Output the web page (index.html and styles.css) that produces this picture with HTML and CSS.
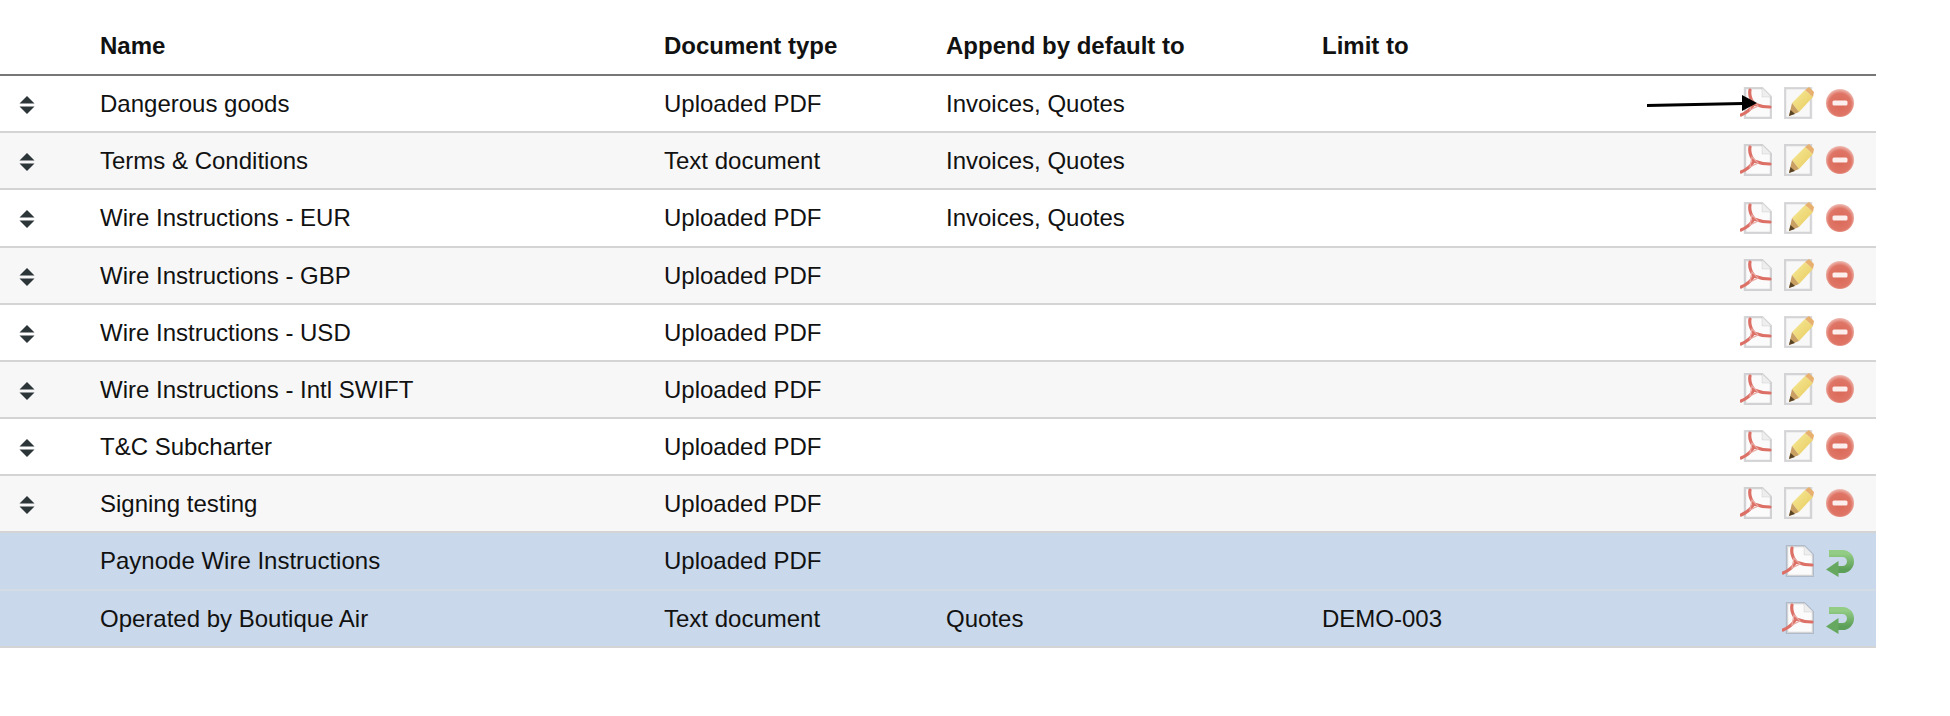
FILE: index.html
```html
<!DOCTYPE html>
<html lang="en">
<head>
<meta charset="utf-8">
<title>Documents</title>
<link rel="stylesheet" href="styles.css">
</head>
<body>
<svg class="defs" width="0" height="0" aria-hidden="true">
  <defs>
    <radialGradient id="minus-grad" cx="0.5" cy="0.55" r="0.55">
      <stop offset="0" stop-color="#da6857"/>
      <stop offset="0.72" stop-color="#df7566"/>
      <stop offset="1" stop-color="#efbcb4"/>
    </radialGradient>
    <linearGradient id="return-grad" x1="0" y1="0" x2="0" y2="1">
      <stop offset="0" stop-color="#93cc85"/>
      <stop offset="1" stop-color="#5c9f58"/>
    </linearGradient>
    <linearGradient id="pencil-grad" x1="0" y1="0" x2="1" y2="1">
      <stop offset="0" stop-color="#f6eb9a"/>
      <stop offset="1" stop-color="#e8c95c"/>
    </linearGradient>
    <symbol id="i-sort" viewBox="0 0 16 18">
      <path d="M8 0 15.500 7.500H.5z" fill="#2c3538"/>
      <path d="M8 18 .5 10.500h15z" fill="#2c3538"/>
    </symbol>
    <symbol id="i-pdf" viewBox="0 0 32 32">
      <path d="M5 1h17l9 9v21H5z" fill="#fbfbfb" stroke="#78787f" stroke-opacity=".3" stroke-width="2.400"/>
      <path d="M22 1v9h9" fill="#eeeeee" stroke="#78787f" stroke-opacity=".15" stroke-width="1"/>
      <path d="M10 3c-1 5 1 10 4 14 M14 17c5 2 10 3 16 3 M14 17c-3 5-8 9-13 11" fill="none" stroke="#dc7066" stroke-width="3.200" stroke-linecap="round"/>
      <path d="M12 13 18 19 10 23z" fill="none" stroke="#e9a8a2" stroke-width="1.200"/>
    </symbol>
    <symbol id="i-edit" viewBox="0 0 30 32">
      <path d="M1 1h26v30H1z" fill="#f8f8f8" stroke="#78787f" stroke-opacity=".28" stroke-width="2.400"/>
      <path d="M8 16 21 3l8 7-14 15z" fill="url(#pencil-grad)"/>
      <path d="M21 3l4-3 5 5-1 5z" fill="#e8b06e"/>
      <path d="M8 16l7 9-10 4z" fill="#c99f62"/>
      <path d="M5 29l1.500-6 4.500 4z" fill="#5a4426"/>
    </symbol>
    <symbol id="i-minus" viewBox="0 0 28 28">
      <circle cx="14" cy="14" r="14" fill="url(#minus-grad)"/>
      <rect x="6.500" y="11.500" width="15" height="5" rx="1.500" fill="#fbeeec"/>
    </symbol>
    <symbol id="i-return" viewBox="0 0 28 28">
      <path d="M3 4.500h13.500a8 8 0 0 1 0 16H10" fill="none" stroke="url(#return-grad)" stroke-width="7"/>
      <path d="M12.500 12v16L0 20.500z" fill="#66a85f"/>
    </symbol>
  </defs>
</svg>
<div class="wrap">
  <table class="docs">
    <thead>
      <tr>
        <th class="c-sort"></th>
        <th class="c-name">Name</th>
        <th class="c-type">Document type</th>
        <th class="c-append">Append by default to</th>
        <th class="c-limit">Limit to</th>
        <th class="c-actions"></th>
      </tr>
    </thead>
    <tbody>
      <tr>
        <td><svg class="sort"><use href="#i-sort"/></svg></td>
        <td>Dangerous goods</td><td>Uploaded PDF</td><td>Invoices, Quotes</td><td></td>
        <td><div class="actions"><svg class="pdf"><use href="#i-pdf"/></svg><svg class="edit"><use href="#i-edit"/></svg><svg class="minus"><use href="#i-minus"/></svg></div></td>
      </tr>
      <tr>
        <td><svg class="sort"><use href="#i-sort"/></svg></td>
        <td>Terms &amp; Conditions</td><td>Text document</td><td>Invoices, Quotes</td><td></td>
        <td><div class="actions"><svg class="pdf"><use href="#i-pdf"/></svg><svg class="edit"><use href="#i-edit"/></svg><svg class="minus"><use href="#i-minus"/></svg></div></td>
      </tr>
      <tr class="tall">
        <td><svg class="sort"><use href="#i-sort"/></svg></td>
        <td>Wire Instructions - EUR</td><td>Uploaded PDF</td><td>Invoices, Quotes</td><td></td>
        <td><div class="actions"><svg class="pdf"><use href="#i-pdf"/></svg><svg class="edit"><use href="#i-edit"/></svg><svg class="minus"><use href="#i-minus"/></svg></div></td>
      </tr>
      <tr>
        <td><svg class="sort"><use href="#i-sort"/></svg></td>
        <td>Wire Instructions - GBP</td><td>Uploaded PDF</td><td></td><td></td>
        <td><div class="actions"><svg class="pdf"><use href="#i-pdf"/></svg><svg class="edit"><use href="#i-edit"/></svg><svg class="minus"><use href="#i-minus"/></svg></div></td>
      </tr>
      <tr>
        <td><svg class="sort"><use href="#i-sort"/></svg></td>
        <td>Wire Instructions - USD</td><td>Uploaded PDF</td><td></td><td></td>
        <td><div class="actions"><svg class="pdf"><use href="#i-pdf"/></svg><svg class="edit"><use href="#i-edit"/></svg><svg class="minus"><use href="#i-minus"/></svg></div></td>
      </tr>
      <tr>
        <td><svg class="sort"><use href="#i-sort"/></svg></td>
        <td>Wire Instructions - Intl SWIFT</td><td>Uploaded PDF</td><td></td><td></td>
        <td><div class="actions"><svg class="pdf"><use href="#i-pdf"/></svg><svg class="edit"><use href="#i-edit"/></svg><svg class="minus"><use href="#i-minus"/></svg></div></td>
      </tr>
      <tr>
        <td><svg class="sort"><use href="#i-sort"/></svg></td>
        <td>T&amp;C Subcharter</td><td>Uploaded PDF</td><td></td><td></td>
        <td><div class="actions"><svg class="pdf"><use href="#i-pdf"/></svg><svg class="edit"><use href="#i-edit"/></svg><svg class="minus"><use href="#i-minus"/></svg></div></td>
      </tr>
      <tr>
        <td><svg class="sort"><use href="#i-sort"/></svg></td>
        <td>Signing testing</td><td>Uploaded PDF</td><td></td><td></td>
        <td><div class="actions"><svg class="pdf"><use href="#i-pdf"/></svg><svg class="edit"><use href="#i-edit"/></svg><svg class="minus"><use href="#i-minus"/></svg></div></td>
      </tr>
      <tr class="shared tall">
        <td></td>
        <td>Paynode Wire Instructions</td><td>Uploaded PDF</td><td></td><td></td>
        <td><div class="actions"><svg class="pdf"><use href="#i-pdf"/></svg><svg class="ret"><use href="#i-return"/></svg></div></td>
      </tr>
      <tr class="shared">
        <td></td>
        <td>Operated by Boutique Air</td><td>Text document</td><td>Quotes</td><td>DEMO-003</td>
        <td><div class="actions"><svg class="pdf"><use href="#i-pdf"/></svg><svg class="ret"><use href="#i-return"/></svg></div></td>
      </tr>
    </tbody>
  </table>
  <svg class="arrow" width="112" height="16" viewBox="0 0 112 16" aria-hidden="true">
    <path d="M0 10.500 96 8.500" stroke="#000" stroke-width="3" fill="none"/>
    <path d="M95 0l15 8-15 8z" fill="#000"/>
  </svg>
</div>
</body>
</html>
```
FILE: styles.css
```css
html, body {
  margin: 0;
  padding: 0;
  background: #fff;
}
body {
  font-family: "Liberation Sans", Arial, sans-serif;
  font-size: 24px;
  color: #111;
}
.defs {
  position: absolute;
}
.wrap {
  position: relative;
  width: 1876px;
  padding-top: 18px;
}
.docs {
  width: 100%;
  border-collapse: separate;
  border-spacing: 0;
  table-layout: fixed;
}
.docs th {
  box-sizing: border-box;
  height: 58px;
  padding: 0;
  text-align: left;
  font-weight: 700;
  font-size: 24px;
  border-bottom: 2px solid #777;
}
.docs td {
  box-sizing: border-box;
  height: 57px;
  padding: 0;
  border-bottom: 2px solid #d4d4d4;
  vertical-align: middle;
}
.docs tr.tall td {
  height: 58px;
}
.c-sort { width: 100px; }
.c-name { width: 564px; }
.c-type { width: 282px; }
.c-append { width: 376px; }
.c-limit { width: 250px; }
.docs tbody tr:nth-child(even) {
  background: #f7f7f7;
}
.docs tbody tr.shared {
  background: #c9d8eb;
}
.docs tbody tr.shared:nth-last-child(2) td {
  border-bottom-color: #d3dbe4;
}
.sort {
  display: block;
  width: 16px;
  height: 18px;
  margin: 2px 0 0 19px;
}
.actions {
  display: flex;
  justify-content: flex-end;
  align-items: center;
  gap: 12px;
  padding: 0 22px 1px 0;
}
.pdf, .edit, .minus, .ret {
  display: block;
  flex: none;
  filter: blur(0.6px);
}
.pdf {
  width: 32px;
  height: 32px;
}
.edit {
  width: 30px;
  height: 32px;
}
.minus {
  width: 28px;
  height: 28px;
}
.ret {
  width: 28px;
  height: 28px;
  margin-top: 4px;
}
.arrow {
  position: absolute;
  left: 1647px;
  top: 95px;
}
```
